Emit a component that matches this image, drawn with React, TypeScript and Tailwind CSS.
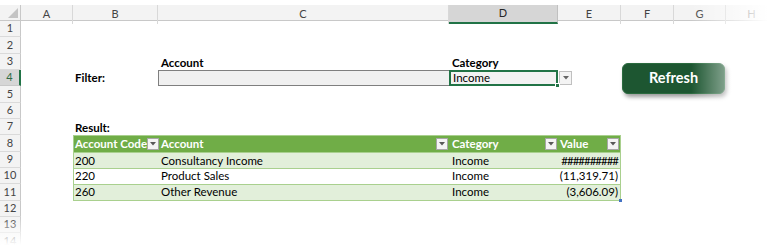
import React from "react";

const FONT = { fontFamily: "Lato, 'Open Sans', 'Liberation Sans', sans-serif" };

function FilterBtn() {
  return (
    <div className="w-[12px] h-[12px] bg-[#f4f4f4] border border-[#a6a6a6] flex items-center justify-center shrink-0">
      <svg width="6" height="4" viewBox="0 0 6 4">
        <path d="M0 0 L6 0 L3 3.5 Z" fill="#595959" />
      </svg>
    </div>
  );
}

const colLetters = [
  { l: "A", sel: false },
  { l: "B", sel: false },
  { l: "C", sel: false },
  { l: "D", sel: true },
  { l: "E", sel: false },
  { l: "F", sel: false },
  { l: "G", sel: false },
  { l: "H", sel: false },
  { l: "", sel: false },
];

const rows = [1, 2, 3, 4, 5, 6, 7, 8, 9, 10, 11, 12, 13, 14];

const data = [
  { code: "200", account: "Consultancy Income", cat: "Income", value: "##########", band: true, hash: true },
  { code: "220", account: "Product Sales", cat: "Income", value: "(11,319.71)", band: false, hash: false },
  { code: "260", account: "Other Revenue", cat: "Income", value: "(3,606.09)", band: true, hash: false },
];

export default function App() {
  return (
    <div className="relative w-[768px] h-[245px] overflow-hidden bg-white text-black whitespace-nowrap" style={FONT}>
      <div className="flex flex-col pt-[5px]">
        {/* column header */}
        <div className="flex h-[16px] bg-[#f3f3f3] border-b border-[#c8c8c8] text-[11px] text-[#444]">
          <div className="w-[21px] shrink-0 h-full border-r border-[#c8c8c8] flex items-end justify-end p-[2px]">
            <svg width="10" height="10" viewBox="0 0 10 10">
              <path d="M10 0 L10 10 L0 10 Z" fill="#c4c4c4" />
            </svg>
          </div>
          <div className="flex-1 min-w-0 grid grid-cols-[52px_85px_291px_109px_63px_53px_52px_52px_1fr]">
            {colLetters.map((c, i) =>
              c.sel ? (
                <div
                  key={i}
                  className="h-full flex items-center justify-center bg-[#d6d6d6] border-r border-[#c0c0c0] border-b-2 border-b-[#217346] text-[#262626]"
                >
                  {c.l}
                </div>
              ) : (
                <div key={i} className="h-full flex items-center justify-center border-r border-[#d8d8d8]">
                  {c.l}
                </div>
              )
            )}
          </div>
        </div>

        <div className="flex">
          {/* row headers */}
          <div className="w-[21px] shrink-0 flex flex-col bg-[#f3f3f3] text-[11px] text-[#444]">
            {rows.map((r) =>
              r === 4 ? (
                <div
                  key={r}
                  className="h-[16.33px] shrink-0 flex items-center justify-center bg-[#d6d6d6] border-b border-[#c8c8c8] border-r-2 border-r-[#217346] text-[#2f6b44]"
                >
                  {r}
                </div>
              ) : (
                <div
                  key={r}
                  className="h-[16.33px] shrink-0 flex items-center justify-center border-b border-[#dadada] border-r border-r-[#c8c8c8]"
                >
                  {r}
                </div>
              )
            )}
          </div>

          {/* sheet area */}
          <div className="flex-1 min-w-0 grid grid-cols-[52px_85px_291px_109px_63px_53px_52px_52px_1fr] grid-rows-[repeat(14,16.33px)] text-[11.5px] leading-[14px]">
            <div className="col-start-3 row-start-3 flex items-end pl-[3px] font-bold">Account</div>
            <div className="col-start-4 row-start-3 flex items-end pl-[3px] font-bold">Category</div>
            <div className="col-start-2 row-start-4 flex items-center pl-[2px] font-bold">Filter:</div>
            <div className="col-start-3 row-start-4 bg-[#f0f0f0] border border-[#7f7f7f] border-r-0" />
            <div className="relative col-start-4 row-start-4 bg-[#f2f2f2] border-2 border-[#217346] flex items-center pl-[2px]">
              Income
              <div className="absolute right-[-4px] bottom-[-4px] w-[5px] h-[5px] bg-[#217346] border border-white" />
            </div>
            <div className="col-start-5 row-start-4 flex items-center pl-[1px]">
              <div className="w-[13px] h-[14px] bg-[#f4f4f4] border border-[#c0c0c0] flex items-center justify-center">
                <svg width="6" height="4" viewBox="0 0 6 4">
                  <path d="M0 0 L6 0 L3 3.5 Z" fill="#666" />
                </svg>
              </div>
            </div>
            <div className="col-start-6 col-span-2 row-start-3 row-span-3 flex items-center justify-center">
              <div className="w-[103px] h-[31px] rounded-[6px] bg-[#1d5631] border border-[#2a6a3e] shadow-[2px_3px_4px_rgba(0,0,0,0.4)] flex items-center justify-center text-white font-bold text-[14.5px]">
                Refresh
              </div>
            </div>
            <div className="col-start-2 row-start-7 flex items-end pl-[2px] font-bold">Result:</div>

            {/* table */}
            <div className="relative min-w-0 col-start-2 col-span-4 row-start-8 row-span-4 border border-[#a9d08e] grid grid-rows-4">
              <div className="grid grid-cols-[84px_291px_109px_minmax(0,1fr)] bg-[#70ad47] text-white font-bold min-h-0">
                <div className="flex items-center justify-between pl-[1px] pr-[0px] min-w-0">
                  <span>Account Code</span>
                  <FilterBtn />
                </div>
                <div className="flex items-center justify-between pl-[3px] pr-[1px]">
                  <span>Account</span>
                  <FilterBtn />
                </div>
                <div className="flex items-center justify-between pl-[3px] pr-[1px]">
                  <span>Category</span>
                  <FilterBtn />
                </div>
                <div className="flex items-center justify-between pl-[2px] pr-[1px] min-w-0">
                  <span>Value</span>
                  <FilterBtn />
                </div>
              </div>
              {data.map((d, i) => (
                <div
                  key={i}
                  className={
                    d.band
                      ? "grid grid-cols-[84px_291px_109px_minmax(0,1fr)] min-h-0 bg-[#e2efda] border-t border-[#a9d08e]"
                      : "grid grid-cols-[84px_291px_109px_minmax(0,1fr)] min-h-0 bg-white border-t border-[#a9d08e]"
                  }
                >
                  <div className="flex items-center pl-[1px]">{d.code}</div>
                  <div className="flex items-center pl-[3px]">{d.account}</div>
                  <div className="flex items-center pl-[3px]">{d.cat}</div>
                  <div
                    className={
                      d.hash
                        ? "flex items-center justify-end pr-[2px] min-w-0 overflow-hidden tracking-[-1px]"
                        : "flex items-center justify-end pr-[2px] min-w-0 overflow-hidden"
                    }
                  >
                    {d.value}
                  </div>
                </div>
              ))}
              <div className="absolute right-[-2px] bottom-[-2px] w-[3px] h-[3px] bg-[#4472c4]" />
            </div>
          </div>
        </div>
      </div>

      {/* edge fade */}
      <div className="pointer-events-none absolute inset-0 bg-[linear-gradient(to_right,rgba(255,255,255,0)_90%,#ffffff_100%)]" />
      <div className="pointer-events-none absolute inset-0 bg-[linear-gradient(to_bottom,rgba(255,255,255,0)_88%,#ffffff_100%)]" />
    </div>
  );
}
